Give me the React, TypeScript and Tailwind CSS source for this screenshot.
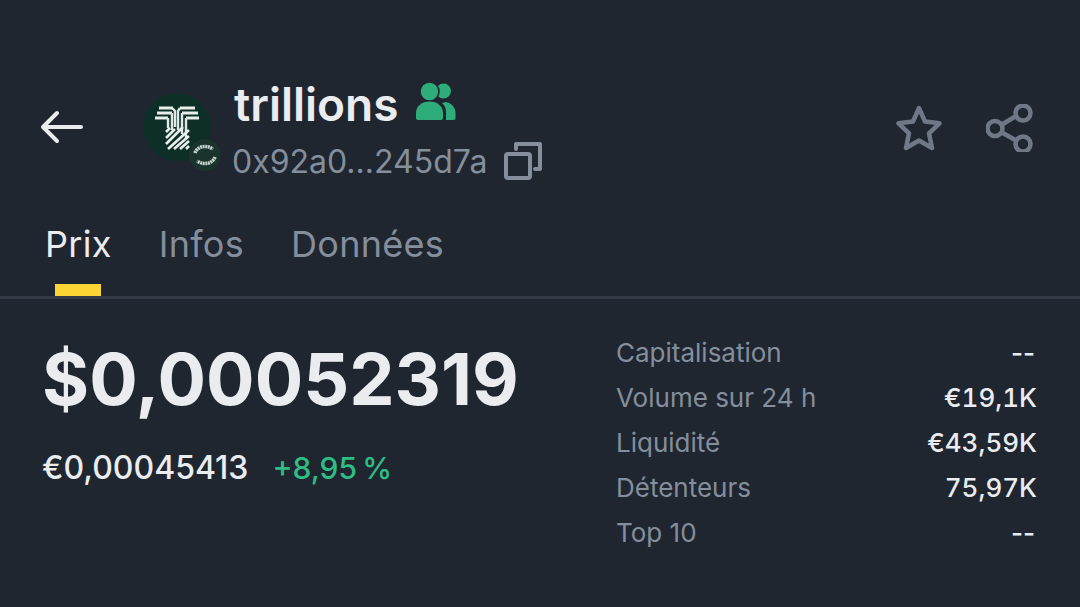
const stats = [
  { label: 'Capitalisation', value: '--' },
  { label: 'Volume sur 24 h', value: '€19,1K' },
  { label: 'Liquidité', value: '€43,59K' },
  { label: 'Détenteurs', value: '75,97K' },
  { label: 'Top 10', value: '--' },
];

function TokenLogo() {
  return (
    <svg width="78" height="84" viewBox="143 94 78 84" fill="none">
      <circle cx="177" cy="127" r="34" fill="#0e2f28" />
      <g stroke="#e8efeb" strokeWidth="3">
        <path d="M159 108h14M180 108h15" />
        <path d="M157 113h15M182 113h16" />
        <path d="M155 118h13M186 118h13" />
      </g>
      <g stroke="#dfe8e4" strokeWidth="2.4" fill="none">
        <path d="M172 108l3 3v16" />
        <path d="M180 108l-2 3v19" />
        <path d="M172 113v17" />
        <path d="M168 118v10" />
        <path d="M182 113v21" />
        <path d="M186 118v21" />
      </g>
      <g stroke="#e8efeb" strokeWidth="2.6">
        <path d="M166 132l4-4M166 138l9-9M166 144l17-17" />
        <path d="M168 149l21-19M174 149l15-13M180 149l9-8M186 149l3-3" />
      </g>
      <circle cx="205" cy="155" r="16" fill="#1a332d" />
      <g fill="none" stroke="#c3d3cc">
        <path d="M195 153c2-6 10-9 18-4" strokeWidth="3.500" strokeDasharray="2 0.600" />
        <path d="M215 157c-2 6-10 9-18 4" strokeWidth="3.500" strokeDasharray="2 0.600" />
      </g>
    </svg>
  );
}

export default function App() {
  return (
    <div className="w-[1080px] h-[607px] overflow-hidden bg-[#1f2630] font-['Inter',sans-serif]">
      <div className="h-[206px] flex items-start pl-[40px] pr-[46px] pt-[80px]">
        <button className="mt-[29px] text-[#eaecef]" aria-label="Retour">
          <svg width="44" height="36" viewBox="0 0 44 36" fill="none" stroke="currentColor" strokeWidth="4" strokeLinecap="round" strokeLinejoin="round">
            <path d="M3 18h38M17 4L3 18l14 14" />
          </svg>
        </button>
        <div className="ml-[59px] mt-[14px] w-[68px] shrink-0">
          <TokenLogo />
        </div>
        <div className="ml-[23px] flex flex-col">
          <div className="flex items-center h-[50px]">
            <span className="text-[46px] leading-[50px] font-semibold text-[#eaecef] mt-[-2px]">trillions</span>
            <svg width="40" height="40" viewBox="0 0 40 40" className="ml-[17px] mt-[-6px]" fill="#2ead7a">
              <circle cx="27.500" cy="9" r="7.500" />
              <path d="M30 20c5 1 9.500 5 9.500 11v5c0 1-.6 2-2 2H30v-8c0-4-1.500-7-4-9z" />
              <circle cx="13.500" cy="9.500" r="9.500" stroke="#1f2630" strokeWidth="1.500" />
              <path d="M13.500 19.500C6 19.500 0 24 0 31v5c0 1.200 1 2 2 2h23c1 0 2-.8 2-2v-5c0-7-6-11.500-13.500-11.500z" />
            </svg>
          </div>
          <div className="flex items-center mt-[11px] h-[40px] ml-[-2px]">
            <span className="text-[32px] leading-[40px] text-[#848e9c] mt-[1px]">0x92a0...245d7a</span>
            <svg width="40" height="40" viewBox="0 0 40 40" fill="none" stroke="#848e9c" strokeWidth="4" strokeLinejoin="round" strokeLinecap="round" className="ml-[16px]">
              <rect x="3" y="13" width="24" height="24" rx="2" />
              <path d="M13 8V3h24v25h-5" />
            </svg>
          </div>
        </div>
        <div className="ml-auto flex items-center gap-[44px] mt-[24px]">
          <svg width="48" height="48" viewBox="0 0 48 48" fill="none" stroke="#6f7887" strokeWidth="4.500" strokeLinejoin="round" className="ml-[2px]">
            <path d="M25 4l6 13.500 14.500 1.800-10.500 10 3 14.700L25 36.500 12 44l3-14.700-10.500-10 14.500-1.800z" />
          </svg>
          <svg width="48" height="48" viewBox="0 0 48 48" fill="none" stroke="#6f7887" strokeWidth="4.500">
            <circle cx="37" cy="9" r="7.500" />
            <circle cx="9" cy="24.500" r="7.500" />
            <circle cx="37" cy="40" r="7.500" />
            <path d="M16 20.500l14-8.500M16 28.500l14 8" />
          </svg>
        </div>
      </div>

      <div className="h-[93px] border-b-[3px] border-[#333a45] flex items-start pl-[45px] gap-[47px] tracking-[0.3px]">
        <div className="flex flex-col items-center">
          <span className="text-[36px] leading-[77px] text-[#eaecef]">Prix</span>
          <div className="w-[46px] h-[12px] mt-[1px] bg-[#fcd535]" />
        </div>
        <span className="text-[36px] leading-[77px] text-[#848e9c]">Infos</span>
        <span className="text-[36px] leading-[77px] text-[#848e9c]">Données</span>
      </div>

      <div className="flex pl-[42px] pr-[43px] pt-[31px]">
        <div className="w-[574px] flex flex-col">
          <span className="text-[72px] leading-[92px] font-bold text-[#eaecef] mt-[3px]">$0,00052319</span>
          <div className="flex items-center mt-[23px] gap-[24px] text-[32px] leading-[40px] font-medium">
            <span className="text-[#eaecef]">€0,00045413</span>
            <span className="text-[#2ebd85] text-[30px]">+8,95{'\u202F'}%</span>
          </div>
        </div>
        <div className="flex-1 flex flex-col">
          {stats.map((s) => (
            <div key={s.label} className="h-[45px] flex items-center justify-between text-[26px]">
              <span className="text-[#848e9c]">{s.label}</span>
              <span className={s.value === '--' ? 'font-medium text-[#eaecef] mr-[2px]' : 'font-medium tabular-nums text-[#eaecef]'}>{s.value}</span>
            </div>
          ))}
        </div>
      </div>
    </div>
  );
}
